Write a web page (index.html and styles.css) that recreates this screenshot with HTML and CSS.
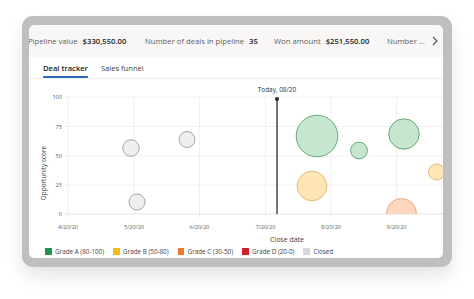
FILE: index.html
```html
<!DOCTYPE html>
<html>
<head>
<meta charset="utf-8">
<link rel="stylesheet" href="styles.css">
</head>
<body>
<div class="frame">
  <div class="panel">
    <div class="kpis">
      <div class="kpi k1"><span class="lbl">Pipeline value</span><span class="val">$330,550.00</span></div>
      <div class="kpi k2"><span class="lbl">Number of deals in pipeline</span><span class="val">35</span></div>
      <div class="kpi k3"><span class="lbl">Won amount</span><span class="val">$251,550.00</span></div>
      <div class="kpi k4"><span class="lbl">Number ...</span></div>
      <svg class="chev" width="6" height="10" viewBox="0 0 6 10"><path d="M1 1 L5 5 L1 9" fill="none" stroke="#555" stroke-width="1.1"/></svg>
    </div>
    <div class="tabs">
      <div class="tab active">Deal tracker</div>
      <div class="tab">Sales funnel</div>
    </div>
    <svg class="chart" width="414" height="166" viewBox="29 79 414 166">
      <defs>
        <clipPath id="plot"><rect x="65" y="85" width="378" height="129"/></clipPath>
      </defs>
      <g stroke="#ececec" stroke-width="0.8">
        <line x1="65" y1="97" x2="443" y2="97"/>
        <line x1="65" y1="126.5" x2="443" y2="126.5"/>
        <line x1="65" y1="156" x2="443" y2="156"/>
        <line x1="65" y1="185" x2="443" y2="185"/>
        <line x1="68" y1="97" x2="68" y2="218"/>
        <line x1="134" y1="97" x2="134" y2="218"/>
        <line x1="199.5" y1="97" x2="199.5" y2="218"/>
        <line x1="265.5" y1="97" x2="265.5" y2="218"/>
        <line x1="331" y1="97" x2="331" y2="218"/>
        <line x1="396.5" y1="97" x2="396.5" y2="218"/>
      </g>
      <line x1="65" y1="214" x2="443" y2="214" stroke="#dcdcdc" stroke-width="0.8"/>
      <g class="tick" text-anchor="end">
        <text x="62" y="99">100</text>
        <text x="62" y="128.5">75</text>
        <text x="62" y="158">50</text>
        <text x="62" y="187">25</text>
        <text x="62" y="216">0</text>
      </g>
      <g class="tick" text-anchor="middle">
        <text x="68" y="229">4/20/20</text>
        <text x="134" y="229">5/20/20</text>
        <text x="199.5" y="229">6/20/20</text>
        <text x="265.5" y="229">7/20/20</text>
        <text x="331" y="229">8/20/20</text>
        <text x="396.5" y="229">9/20/20</text>
      </g>
      <text class="axis-title" x="287" y="241.5" text-anchor="middle">Close date</text>
      <text class="axis-title y" x="0" y="0" text-anchor="middle" transform="translate(45.5 173) rotate(-90)">Opportunity score</text>
      <g clip-path="url(#plot)" stroke-width="0.9">
        <g fill="#efefef" stroke="#9b9b9b">
          <circle cx="131" cy="148" r="8.3"/>
          <circle cx="187" cy="139.5" r="8"/>
          <circle cx="137" cy="202" r="8"/>
        </g>
        <g fill="#c6e6d0" stroke="#5e9f6d">
          <circle cx="317" cy="136" r="20.8"/>
          <circle cx="359" cy="150.5" r="8.4"/>
          <circle cx="404" cy="134" r="15.2"/>
        </g>
        <g fill="#fee6b7" stroke="#dfb466">
          <circle cx="312" cy="186" r="14.8"/>
          <circle cx="436.5" cy="172" r="8"/>
        </g>
        <g fill="#fcd6bd" stroke="#e2a77c">
          <circle cx="401.5" cy="213.5" r="15"/>
        </g>
      </g>
      <line x1="277" y1="99" x2="277" y2="214" stroke="#2b2b2b" stroke-width="1.3"/>
      <circle cx="277" cy="99" r="2.1" fill="#2b2b2b"/>
      <text class="today" x="277" y="92" text-anchor="middle">Today, 08/20</text>
    </svg>
    <div class="legend">
      <div class="item"><span class="sw a"></span>Grade A (80-100)</div>
      <div class="item"><span class="sw b"></span>Grade B (50-80)</div>
      <div class="item"><span class="sw c"></span>Grade C (30-50)</div>
      <div class="item"><span class="sw d"></span>Grade D (20-0)</div>
      <div class="item"><span class="sw e"></span>Closed</div>
    </div>
  </div>
</div>
</body>
</html>
```
FILE: styles.css
```css
html, body {
  margin: 0;
  padding: 0;
  background: #ffffff;
}
body {
  width: 474px;
  height: 299px;
  overflow: hidden;
  font-family: "Open Sans", "Noto Sans", sans-serif;
}
.frame {
  margin: 16px 0 0 22px;
  width: 430px;
  height: 251px;
  box-sizing: border-box;
  padding: 9px 9px 9px 7px;
  background: #bfbfbf;
  border-radius: 11px;
  box-shadow: 0 10px 18px rgba(0, 0, 0, 0.10);
}
.panel {
  width: 414px;
  height: 233px;
  background: #ffffff;
  border-radius: 6px 6px 5px 5px;
  overflow: hidden;
  display: flex;
  flex-direction: column;
}
.kpis {
  height: 32px;
  flex: none;
  background: #f8f7f6;
  display: flex;
  align-items: center;
  font-size: 7.7px;
  white-space: nowrap;
}
.kpi {
  display: flex;
  gap: 5px;
  align-items: baseline;
  flex: none;
  overflow: hidden;
}
.k1 { width: 117px; margin-left: -1px; }
.k2 { width: 129px; }
.k3 { width: 113px; }
.k4 { width: 39px; }
.lbl {
  color: #616161;
}
.val {
  color: #242424;
  font-weight: 600;
}
.chev {
  flex: none;
  margin-left: 6px;
}
.tabs {
  height: 22px;
  flex: none;
  box-sizing: border-box;
  border-bottom: 1px solid #eeeeee;
  display: flex;
  gap: 13px;
  padding-left: 14px;
  font-size: 7.6px;
}
.tab {
  color: #424242;
  padding-top: 6px;
  box-sizing: border-box;
  height: 21px;
}
.tab.active {
  color: #242424;
  font-weight: 600;
  border-bottom: 2px solid #2f6ab8;
  border-radius: 0 0 1px 1px;
}
.chart {
  display: block;
  flex: none;
}
.tick {
  font-size: 5.6px;
  fill: #616161;
}
.axis-title {
  font-size: 7px;
  fill: #424242;
}
.axis-title.y {
  font-size: 6.4px;
}
.today {
  font-size: 6.4px;
  fill: #333333;
}
.legend {
  display: flex;
  align-items: center;
  gap: 9px;
  padding-left: 16px;
  height: 13px;
  font-size: 6.3px;
  color: #424242;
  white-space: nowrap;
}
.item {
  display: flex;
  align-items: center;
  gap: 3.5px;
}
.sw {
  width: 6.5px;
  height: 6.5px;
  display: inline-block;
}
.sw.a { background: #22944a; }
.sw.b { background: #f2bd1d; }
.sw.c { background: #ef7a2e; }
.sw.d { background: #d21f2a; }
.sw.e { background: #d7d7d7; }
```
